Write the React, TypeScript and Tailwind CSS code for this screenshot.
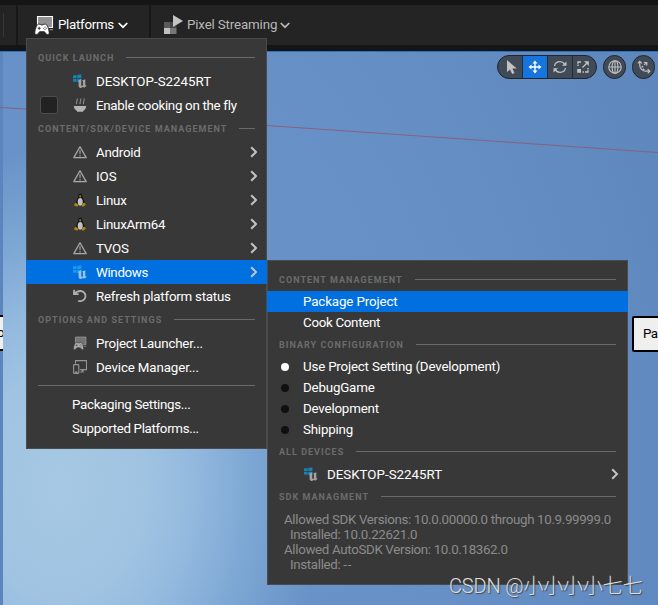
import type { ReactNode } from "react";

const Chevron = ({ className = "" }: { className?: string }) => (
  <svg className={className} width="8" height="12" viewBox="0 0 8 12" fill="none" stroke="currentColor" strokeWidth="2">
    <path d="M1.2 1.2 6 6 1.2 10.8" />
  </svg>
);

const ChevronDown = () => (
  <svg width="10" height="7" viewBox="0 0 10 7" fill="none" stroke="currentColor" strokeWidth="1.7">
    <path d="M.7 1 5 5.2 9.3 1" />
  </svg>
);

const WindowsIcon = ({ active = false }: { active?: boolean }) => (
  <svg width="14" height="14" viewBox="0 0 14 14">
    <path
      fill={active ? "#159cf0" : "#1483b5"}
      d="M0 1.6 3.6 1v3.300H0zM4.200.900 8.400.200v4.100H4.200zM0 4.900h3.600v3L0 7.400zM4.200 4.900h4.200v3.700L4.200 8z"
    />
    <path
      fill={active ? "#9cc0e6" : "#a2a2a2"}
      d="M4.800 7 8.200 5v5.800c0 1 .500 1.400 1.400 1l.300-.400V7l-1-.5 3.400-1.300v5.600c0 .800.400.900 1.300.500-.400 1.300-1.400 2.100-2.600 2.500l-.900-1c-.7.800-1.600 1.200-2.500 1.100-1.300-.1-2-.800-2-2.100V7.600z"
    />
  </svg>
);

const CookIcon = () => (
  <svg width="14" height="14" viewBox="0 0 14 14" fill="none">
    <path d="M.8 8h12.400c-.2 2.400-1.200 4-3 4.900v.9H4v-.9C2.200 12 1 10.400.8 8Z" fill="#b4b4b4" />
    <path
      d="M4.200.5C5 2 2.800 3.200 3.600 6.200M7.600.5c1 1.500-1.200 2.700-.4 5.700M11 .5c1 1.500-1.200 2.700-.4 5.700"
      stroke="#8c8c8c"
      strokeWidth="1.1"
    />
  </svg>
);

const WarnIcon = () => (
  <svg width="14" height="14" viewBox="0 0 14 14" fill="none" stroke="#a8a8a8" strokeWidth="1.3">
    <path d="M7 1.7 13.200 12.600H.8z" strokeLinejoin="round" />
    <path d="M7 5.200v3.800M7 9.900v1.500" strokeWidth="1.500" stroke="#8b8b8b" />
  </svg>
);

const LinuxIcon = () => (
  <svg width="14" height="14" viewBox="0 0 14 14">
    <path fill="#161616" d="M7.300.6c1.500 0 2.100 1.200 2.100 2.700 0 2 2.800 4.500 2.500 7.500L9.500 13h-5l-2-2.300c0-2.700 2.700-4.900 2.700-7.200C5.200 1.800 5.900.6 7.300.6Z" />
    <ellipse cx="7.200" cy="8.800" rx="2.500" ry="3.900" fill="#c2c2c2" />
    <path fill="#8a8a8a" d="M6.200 2.500h2v.8h-2z" />
    <path fill="#b8860f" d="m6 3.600 1.200-.5 1.200.6-1.200.9zM3 9.700l2.600 2.500-.7 1.400-3.700-.9.400-2zM11.200 9.600l1.700 2.200-2.700 1.900-1.400-.4.500-2.600z" />
  </svg>
);

const RefreshIcon = () => (
  <svg width="14" height="14" viewBox="0 0 14 14" fill="none" stroke="#b0b0b0" strokeWidth="1.8">
    <path d="M1 .8v4.400h4.600M1.600 4.800C3.200 2.800 5 2 7.400 2a5 5 0 0 1 0 10.200H5.200" />
  </svg>
);

const LauncherIcon = ({ bright = false, size = 14 }: { bright?: boolean; size?: number }) => (
  <svg width={size} height={size} viewBox="0 0 20 20">
    <path d="M3.500 1.500h15v11h-15z" fill={bright ? "#929292" : "#747474"} stroke={bright ? "#fff" : "#999"} strokeWidth="1.1" />
    <path d="M15.500 14.700h3.500" stroke="#808080" strokeWidth="1.300" />
    <path
      d="M4.500 9.200h1.700l.8.700h2l.8-.7h1.700c1.700 0 3.300 4.500 3.700 8.200.2 2.300-1.900 2.900-3.200 1.300l-1.600-2H5.600l-1.600 2C2.700 20.300.6 19.700.8 17.400c.4-3.700 2-8.200 3.700-8.200Z"
      fill={bright ? "#fff" : "#b0b0b0"}
      stroke={bright ? "#242424" : "#383838"}
      strokeWidth=".9"
    />
    <path d="M3.700 13.300h3M5.200 11.800v3M9.300 13.300h.9M11.800 13.300h.9M11 11.600v.9M11 14.100v.9" stroke={bright ? "#222" : "#444"} strokeWidth=".9" />
  </svg>
);

const DevicesIcon = () => (
  <svg width="14" height="14" viewBox="0 0 14 14" fill="none" stroke="#969696" strokeWidth="1.100">
    <path d="M2.500 3.500V.6h11v9H7.200M7.300 12h3.500M8.500 10.800h2" />
    <rect x=".6" y="4.600" width="5.200" height="8.800" rx=".6" />
    <path d="M2 12.200h2.400" strokeWidth="1.500" />
  </svg>
);

const StreamIcon = () => (
  <svg width="20" height="20" viewBox="0 0 20 20">
    <path fill="#5a5a5a" d="M0 7h6v6H0z" />
    <path fill="#c0c0c0" d="M0 13h6v6H0z" />
    <path fill="#777" d="M6 13h6.500v6H6z" />
    <path fill="#454545" d="M6 7h6.500v6H6z" />
    <path fill="#c4c4c4" d="m9 0 10 6-10 6z" />
  </svg>
);

function Heading({ children }: { children: ReactNode }) {
  return (
    <div className="flex h-[23px] items-center gap-3 px-[11px] text-[9px] font-bold tracking-[1.03px] text-[#6c6c6c]">
      <span className="whitespace-nowrap">{children}</span>
      <span className="h-px flex-1 bg-[#6a6a6a]" />
    </div>
  );
}

type ItemProps = {
  label: string;
  icon?: ReactNode;
  tracking?: string;
  arrow?: boolean;
  active?: boolean;
  checkbox?: boolean;
};

function Item({ label, icon, tracking = "", arrow, active, checkbox }: ItemProps) {
  return (
    <div className={`flex h-6 items-center ${active ? "-mx-px bg-[#0070e0] px-px" : ""}`}>
      <div className="flex w-[46px] items-center pl-[13px]">
        {checkbox && <span className="size-[18px] rounded-[3px] border border-[#4c4c4c] bg-[#222]" />}
      </div>
      {icon && <div className="w-[23px]">{icon}</div>}
      <span className={`mt-0.5 ${icon ? "" : "-ml-px"} ${tracking}`}>{label}</span>
      {arrow && <Chevron className="ml-auto mr-2 text-[#c4c4c4]" />}
    </div>
  );
}

const platforms = [
  { label: "Android", icon: <WarnIcon />, arrow: true, tracking: "tracking-[-0.25px]" },
  { label: "IOS", icon: <WarnIcon />, arrow: true },
  { label: "Linux", icon: <LinuxIcon />, arrow: true, tracking: "tracking-[-0.25px]" },
  { label: "LinuxArm64", icon: <LinuxIcon />, arrow: true, tracking: "tracking-[-0.25px]" },
  { label: "TVOS", icon: <WarnIcon />, arrow: true, tracking: "tracking-[-0.2px]" },
  { label: "Windows", icon: <WindowsIcon active />, arrow: true, active: true, tracking: "tracking-[-0.35px]" },
  { label: "Refresh platform status", icon: <RefreshIcon />, tracking: "tracking-[-0.23px]" },
];

function PlatformsMenu() {
  return (
    <div className="absolute left-[26px] top-[38px] h-[411px] w-[241px] border border-[#4b4b4b] bg-[#383838] pt-[7px] text-white">
      <Heading>QUICK LAUNCH</Heading>
      <Item label="DESKTOP-S2245RT" icon={<WindowsIcon />} />
      <Item label="Enable cooking on the fly" icon={<CookIcon />} checkbox tracking="tracking-[-0.3px]" />
      <Heading>CONTENT/SDK/DEVICE MANAGEMENT</Heading>
      {platforms.map((p) => (
        <Item key={p.label} {...p} />
      ))}
      <Heading>OPTIONS AND SETTINGS</Heading>
      <Item label="Project Launcher..." icon={<LauncherIcon />} tracking="tracking-[-0.17px]" />
      <Item label="Device Manager..." icon={<DevicesIcon />} tracking="tracking-[-0.13px]" />
      <div className="mx-[11px] my-[6px] h-px bg-[#6a6a6a]" />
      <Item label="Packaging Settings..." tracking="tracking-[-0.3px]" />
      <Item label="Supported Platforms..." tracking="tracking-[-0.33px]" />
    </div>
  );
}

const configs = ["Use Project Setting (Development)", "DebugGame", "Development", "Shipping"];

function WindowsMenu() {
  return (
    <div className="absolute left-[267px] top-[260px] h-[325px] w-[361px] border border-[#4b4b4b] bg-[#383838] pt-[7px] text-white">
      <Heading>CONTENT MANAGEMENT</Heading>
      <div className="-mx-px flex h-[21px] items-center bg-[#0070e0] pl-9 tracking-[-0.13px]">Package Project</div>
      <div className="flex h-[21px] items-center pl-[35px] tracking-[-0.3px]">Cook Content</div>
      <Heading>BINARY CONFIGURATION</Heading>
      {configs.map((name, i) => (
        <div key={name} className="flex h-[21px] items-center pl-[13px] tracking-[-0.19px]">
          <span className={`size-2 rounded-full ${i === 0 ? "bg-white" : "bg-[#101010]"}`} />
          <span className="ml-[14px]">{name}</span>
        </div>
      ))}
      <Heading>ALL DEVICES</Heading>
      <div className="flex h-[22px] items-center pl-9">
        <WindowsIcon />
        <span className="ml-[9px] mt-0.5">DESKTOP-S2245RT</span>
        <Chevron className="ml-auto mr-2 text-[#c4c4c4]" />
      </div>
      <Heading>SDK MANAGMENT</Heading>
      <div className="pl-4 pt-1 leading-[15px] tracking-[-0.34px] whitespace-pre text-[#8b8b8b]">
        <p>Allowed SDK Versions: 10.0.00000.0 through 10.9.99999.0</p>
        <p className="pl-[6px]">Installed: 10.0.22621.0</p>
        <p>Allowed AutoSDK Version: 10.0.18362.0</p>
        <p className="pl-[6px]">
          Installed: <span className="tracking-[0.6px]">--</span>
        </p>
      </div>
    </div>
  );
}

function Toolbar() {
  return (
    <header className="flex h-[51px] border-t-[5px] border-b-[6px] border-[#151515] bg-[#242424]">
      <div className="flex w-[18px] items-center border-r-2 border-[#181818]">
        <span className="ml-[3px] h-6 w-px bg-[#363636]" />
      </div>
      <div className="flex w-[133px] items-center border-r-2 border-[#181818] pl-4 text-white">
        <LauncherIcon bright size={20} />
        <span className="ml-1 mr-1 tracking-[-0.3px]">Platforms</span>
        <ChevronDown />
      </div>
      <div className="flex items-center pl-[13px] text-[#b8b8b8]">
        <StreamIcon />
        <span className="ml-[3px] mr-[3px] tracking-[-0.15px]">Pixel Streaming</span>
        <ChevronDown />
      </div>
    </header>
  );
}

function ViewportTools() {
  return (
    <div className="absolute left-[497px] top-[55px] flex text-[#c2c2c2]">
      <div className="flex h-6 w-[100px] overflow-hidden rounded-full border border-[#20262f] bg-[#414a57]">
        <div className="flex w-6 items-center justify-center pl-1">
          <svg width="12" height="15" viewBox="0 0 12 15">
            <path d="M1 0v12l3-2.600L6.200 14l2.300-1-2.100-4.400h4.400z" fill="currentColor" />
          </svg>
        </div>
        <div className="flex w-[26px] items-center justify-center border-x border-[#252c35] bg-[#1575dc] text-white">
          <svg width="14" height="14" viewBox="0 0 14 14">
            <path d="M7 .5 9.500 3.500H7.700v2.800h2.800V4.500l3 2.500-3 2.500V7.700H7.700v2.800h1.800L7 13.500l-2.500-3h1.800V7.700H3.500v1.800L.5 7l3-2.500v1.800h2.800V3.500H4.500z" fill="currentColor" />
          </svg>
        </div>
        <div className="flex w-[25px] items-center justify-center border-r border-[#252c35]">
          <svg width="14" height="14" viewBox="0 0 14 14" fill="none" stroke="currentColor" strokeWidth="1.300">
            <path d="M1.500 6C2 3.200 4.300 1.700 7 1.700c2 0 3.500.8 4.700 2.300M12.500 8c-.5 2.800-2.800 4.300-5.500 4.300-2 0-3.500-.8-4.700-2.300" />
            <path d="M13.500 1.500v4.300H9zM.5 12.500V8.200H5z" fill="currentColor" stroke="none" />
          </svg>
        </div>
        <div className="flex flex-1 items-center justify-center pr-1">
          <svg width="12" height="12" viewBox="0 0 12 12" fill="none" stroke="currentColor" strokeWidth="1.400">
            <path d="M5.500 6.500l5-5M1 5V3.500M1 2.700V1h3M11 7v1.500M11 9.300V11H8M7 11H5.500" />
            <path d="M7 .2h4.800V5zM.2 8h3.800v3.800H.2z" fill="currentColor" stroke="none" />
          </svg>
        </div>
      </div>
      <div className="ml-[6px] flex h-6 w-[23px] items-center justify-center rounded-full border border-[#20262f] bg-[#414a57]">
        <svg className="shrink-0" width="14" height="14" viewBox="0 0 14 14" fill="none" stroke="currentColor" strokeWidth="1.100">
          <circle cx="7" cy="7" r="6.200" />
          <ellipse cx="7" cy="7" rx="2.900" ry="6.200" />
          <path d="M.8 7h12.400M7 .8v12.400" />
        </svg>
      </div>
      <div className="ml-[6px] flex h-6 w-[23px] items-center justify-center rounded-full border border-[#20262f] bg-[#414a57]">
        <svg className="shrink-0" width="14" height="14" viewBox="0 0 14 14" fill="none" stroke="currentColor" strokeWidth="1.200">
          <path d="M2.800 1.500v4.300c.3 2.800 2.700 5 5.700 5.400h4M.8 3.300l2-2 2 2M10.700 9.200l2.100 2-2.100 2.100M4.500 7.500 6 6M7.200 4.800l1.800-1.600M6.800 2.500h3v3M6 8.800l1.300 1.200" />
        </svg>
      </div>
    </div>
  );
}

export default function App() {
  return (
    <div className="relative flex h-[605px] w-[658px] flex-col overflow-hidden font-[Roboto,sans-serif] text-[13.33px] leading-4">
      <Toolbar />
      <main className="relative flex-1 border-t border-[#2b73c2] bg-[radial-gradient(ellipse_688px_896px_at_60px_435px,#a6c8e4_0%,#9fc3e1_12.5%,#94badf_19%,#7ca6d3_28%,#6992c8_38%,#6690c5_62%,#5d86bd_100%)]">
        <svg className="absolute inset-0" width="658" height="553" fill="none" stroke="#8a5f80" strokeWidth="1">
          <path d="M0 55.500 26 57M267 73.500 658 100.500" />
        </svg>
        <div className="h-full w-[3px] bg-[#5c85bd]" />
      </main>
      <div className="absolute -left-2 top-[315px] flex h-9 w-[11px] items-center overflow-hidden border-y-2 border-black bg-[#efefef] pl-[5px] text-black">o</div>
      <div className="absolute left-[632px] top-[316px] flex h-9 w-20 items-center rounded-[2px] border-2 border-black bg-[#efefef] pl-[9px] tracking-[-0.5px] text-black">Pa</div>
      <ViewportTools />
      <PlatformsMenu />
      <WindowsMenu />
      <div className="absolute left-[449px] top-[574px] whitespace-nowrap font-[Roboto,'Noto_Sans_CJK_SC',sans-serif] text-[20px] font-light leading-6 tracking-[-0.15px] text-[#dedede] [text-shadow:1px_1px_1px_#444]">
        CSDN @小小小小七七
      </div>
    </div>
  );
}
